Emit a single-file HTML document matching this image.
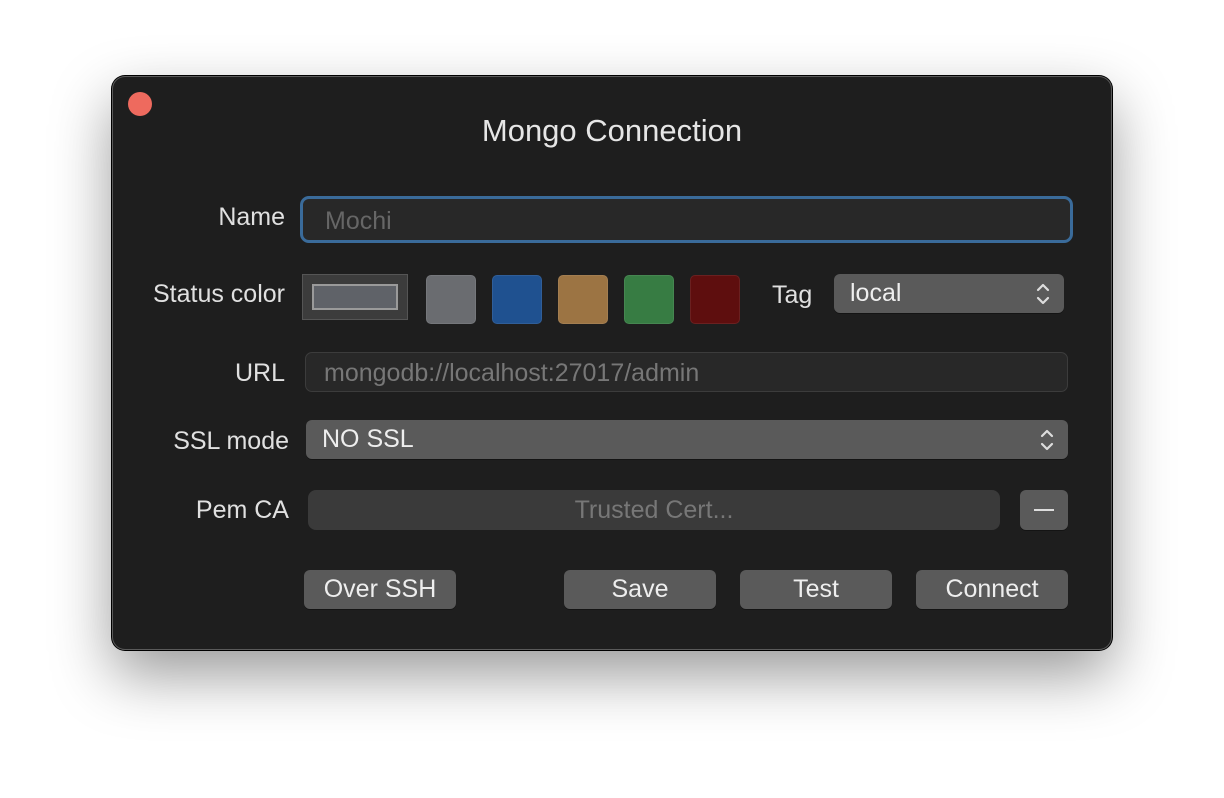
<!DOCTYPE html>
<html><head><meta charset="utf-8"><style>
*{box-sizing:border-box;margin:0;padding:0}
body{width:1224px;height:798px;background:#fff;position:relative;overflow:hidden;font-family:"Liberation Sans",sans-serif;}
.win{position:absolute;left:112px;top:76px;width:1000px;height:574px;background:#1e1e1e;border:1px solid #5a5a5a;border-radius:13px;box-shadow:0 25px 60px rgba(0,0,0,.4),0 0 0 1px #000;}
.a{position:absolute}
.lbl{position:absolute;color:#e0e0e0;font-size:25px;text-align:right;white-space:nowrap}
.btn{position:absolute;background:#5a5a5a;border-radius:6px;color:#eee;font-size:25px;text-align:center;line-height:39px;height:39px;box-shadow:0 1px 0 rgba(0,0,0,.3)}
.sw{position:absolute;top:275px;width:50px;height:49px;border-radius:5px;border:1px solid rgba(255,255,255,.08)}
</style></head><body>
<div class="win"></div>
<div class="a" style="left:128px;top:92px;width:24px;height:24px;border-radius:50%;background:#ee6a5e"></div>
<div class="a" style="left:0;width:1224px;top:113px;text-align:center;color:#e6e6e6;font-size:31px">Mongo Connection</div>

<div class="lbl" style="right:939px;top:203px">Name</div>
<div class="a" style="left:300px;top:196px;width:773px;height:47px;border:3px solid #3a6b9a;border-radius:9px;background:#282828"></div>
<div class="a" style="left:325px;top:207px;color:#666;font-size:25px">Mochi</div>

<div class="lbl" style="right:939px;top:280px">Status color</div>
<div class="a" style="left:302px;top:274px;width:106px;height:46px;background:#3c3c3c;border:1px solid #555"></div>
<div class="a" style="left:312px;top:284px;width:86px;height:26px;background:#5f6268;border:2px solid #9a9a9a"></div>
<div class="sw" style="left:426px;background:#6a6c70"></div>
<div class="sw" style="left:492px;background:#1f5190"></div>
<div class="sw" style="left:558px;background:#9c7443"></div>
<div class="sw" style="left:624px;background:#377c43"></div>
<div class="sw" style="left:690px;background:#5e0e0e"></div>
<div class="lbl" style="left:772px;top:281px">Tag</div>
<div class="btn" style="left:834px;top:274px;width:230px;text-align:left;padding-left:16px;line-height:38px">local</div>

<div class="lbl" style="right:939px;top:359px">URL</div>
<div class="a" style="left:305px;top:352px;width:763px;height:40px;background:#282828;border:1px solid #3c3c3c;border-radius:7px"></div>
<div class="a" style="left:324px;top:359px;color:#777;font-size:25px">mongodb://localhost:27017/admin</div>

<div class="lbl" style="right:935px;top:427px">SSL mode</div>
<div class="btn" style="left:306px;top:420px;width:762px;text-align:left;padding-left:16px;line-height:38px">NO SSL</div>

<div class="lbl" style="right:935px;top:496px">Pem CA</div>
<div class="a" style="left:308px;top:490px;width:692px;height:40px;background:#3a3a3a;border-radius:8px;color:#777;font-size:25px;text-align:center;line-height:40px">Trusted Cert...</div>
<div class="btn" style="left:1020px;top:490px;width:48px;height:40px"></div>
<div class="a" style="left:1034px;top:509px;width:20px;height:2px;background:#ddd"></div>

<svg class="a" style="left:1034px;top:281px" width="18" height="26" viewBox="0 0 18 26"><path d="M4 9 L9 4 L14 9 M4 17 L9 22 L14 17" fill="none" stroke="#ddd" stroke-width="2.2" stroke-linecap="round" stroke-linejoin="round"/></svg>
<svg class="a" style="left:1038px;top:427px" width="18" height="26" viewBox="0 0 18 26"><path d="M4 9 L9 4 L14 9 M4 17 L9 22 L14 17" fill="none" stroke="#ddd" stroke-width="2.2" stroke-linecap="round" stroke-linejoin="round"/></svg>

<div class="btn" style="left:304px;top:570px;width:152px">Over SSH</div>
<div class="btn" style="left:564px;top:570px;width:152px">Save</div>
<div class="btn" style="left:740px;top:570px;width:152px">Test</div>
<div class="btn" style="left:916px;top:570px;width:152px">Connect</div>
</body></html>
